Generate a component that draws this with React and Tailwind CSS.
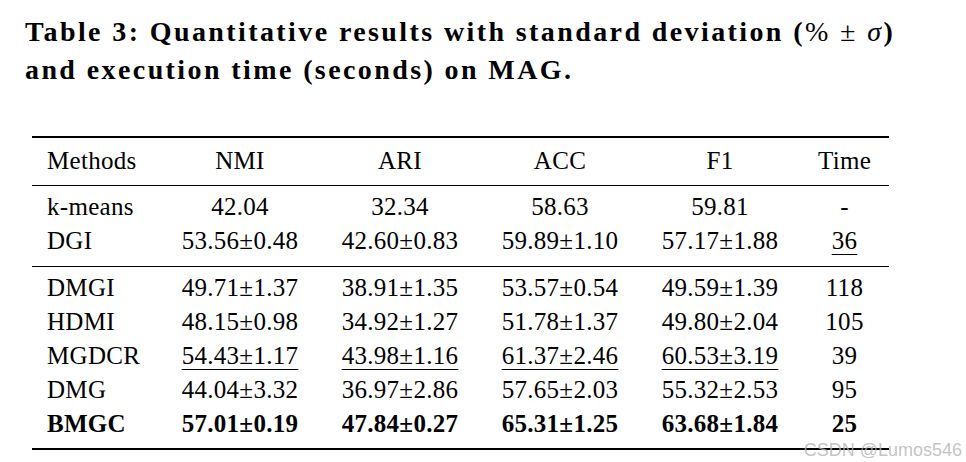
import React from 'react';

const serif = { fontFamily: '"Liberation Serif", "DejaVu Serif", serif' };

const groupA = [
  { m: 'k-means', v: ['42.04', '32.34', '58.63', '59.81'], t: '-' },
  { m: 'DGI', v: ['53.56±0.48', '42.60±0.83', '59.89±1.10', '57.17±1.88'], t: '36', ut: true },
];

const groupB = [
  { m: 'DMGI', v: ['49.71±1.37', '38.91±1.35', '53.57±0.54', '49.59±1.39'], t: '118' },
  { m: 'HDMI', v: ['48.15±0.98', '34.92±1.27', '51.78±1.37', '49.80±2.04'], t: '105' },
  { m: 'MGDCR', v: ['54.43±1.17', '43.98±1.16', '61.37±2.46', '60.53±3.19'], t: '39', u: true },
  { m: 'DMG', v: ['44.04±3.32', '36.97±2.86', '57.65±2.03', '55.32±2.53'], t: '95' },
  { m: 'BMGC', v: ['57.01±0.19', '47.84±0.27', '65.31±1.25', '63.68±1.84'], t: '25', b: true },
];

const cols = 'grid grid-cols-[128px_160px_160px_160px_160px_89px]';

const Row = ({ r }) => (
  <div className={`${cols} h-[34px] items-center leading-none pb-[6px] ${r.b ? 'font-bold' : ''}`}>
    <div className="pl-[15px]">{r.m}</div>
    {r.v.map((x, i) => (
      <div key={i} className="text-center">
        <span className={r.u ? 'underline decoration-1 underline-offset-[5px]' : ''}>{x}</span>
      </div>
    ))}
    <div className="text-center">
      <span className={r.ut ? 'underline decoration-1 underline-offset-[5px]' : ''}>{r.t}</span>
    </div>
  </div>
);

export default function App() {
  return (
    <div className="relative w-[966px] h-[462px] bg-white text-black overflow-hidden" style={serif}>
      <div className="pl-[25px] pt-[13px] text-[28px] leading-[38px] font-bold tracking-[2.4px] whitespace-nowrap">
        Table 3: Quantitative results with standard deviation (<span className="font-normal">%</span> <span className="font-normal">±</span> <span className="font-normal italic">σ</span>)
        <br />
        and execution time (seconds) on MAG.
      </div>
      <div className="ml-[32px] mt-[47px] w-[857px] text-[25px] tracking-[0.3px]">
        <div className="h-[2px] bg-black" />
        <div className={`${cols} h-[47px] items-center leading-none pb-[2px]`}>
          <div className="pl-[15px]">Methods</div>
          <div className="text-center">NMI</div>
          <div className="text-center">ARI</div>
          <div className="text-center">ACC</div>
          <div className="text-center">F1</div>
          <div className="text-center">Time</div>
        </div>
        <div className="h-px bg-black" />
        <div className="py-[6px]">
          {groupA.map((r) => <Row key={r.m} r={r} />)}
        </div>
        <div className="h-px bg-black" />
        <div className="pt-[6px] pb-[5px]">
          {groupB.map((r) => <Row key={r.m} r={r} />)}
        </div>
        <div className="h-[2px] bg-black" />
      </div>
      <div
        className="absolute right-[4px] top-[437px] text-[18px] text-[#b4b4b4]/80"
        style={{ fontFamily: '"Liberation Sans", Arial, sans-serif' }}
      >
        CSDN @Lumos546
      </div>
    </div>
  );
}
